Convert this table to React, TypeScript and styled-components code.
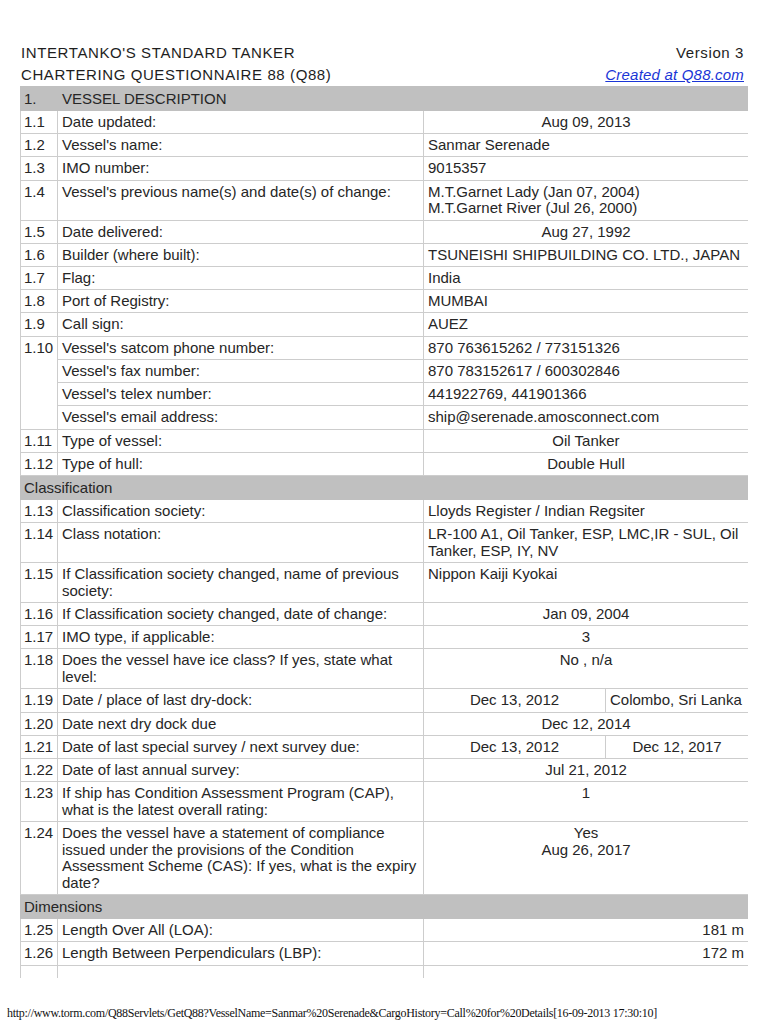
import React from "react";
import styled, { createGlobalStyle } from "styled-components";

const Global = createGlobalStyle`
  html, body { margin: 0; padding: 0; background: #ffffff; }
  body { font-family: "Liberation Sans", Arial, sans-serif; color: #262626; }
`;

const Page = styled.div`
  width: 768px;
  height: 1024px;
  display: flex;
  flex-direction: column;
  overflow: hidden;
`;

const Head = styled.header`
  display: flex;
  justify-content: space-between;
  padding: 42px 24px 0 21px;
  font-size: 15px;
  line-height: 22px;
  letter-spacing: 0.6px;
  color: #1e1e1e;
`;

const HeadCol = styled.div<{ $right?: boolean }>`
  display: flex;
  flex-direction: column;
  align-items: ${(p) => (p.$right ? "flex-end" : "flex-start")};
`;

const Link = styled.a`
  color: #1a35d6;
  font-style: italic;
  text-decoration: underline;
  letter-spacing: 0.2px;
`;

const Clip = styled.div`
  margin-left: 20px;
  width: 728px;
  height: 892px;
  overflow: hidden;
`;

const Table = styled.table`
  width: 728px;
  border-collapse: collapse;
  table-layout: fixed;
  font-size: 15px;
  line-height: 16.6px;
`;

const Cell = styled.td<{ $align?: "left" | "center" | "right" }>`
  border: 1px solid #cdcdcd;
  padding: 3px 4px 2.65px 4px;
  vertical-align: top;
  text-align: ${(p) => p.$align || "left"};
  white-space: pre-line;
  overflow: hidden;
`;

const NumCell = styled(Cell)`
  padding-left: 3px;
  padding-right: 0;
  white-space: nowrap;
`;

const SectionCell = styled.td`
  background: #c0c0c0;
  border: 1px solid #c0c0c0;
  padding: 4px 3px 3px 3px;
  line-height: 16px;
  vertical-align: top;
`;

const SectionNum = styled.span`
  display: inline-block;
  width: 38px;
`;

const EmptyRow = styled.tr`
  height: 24px;
  & > td { border-bottom: none; }
`;

const Footer = styled.footer`
  margin-top: auto;
  padding: 0 0 4px 7px;
  font-family: "Liberation Serif", "Times New Roman", serif;
  font-size: 12px;
  line-height: 14px;
  color: #111111;
  letter-spacing: -0.28px;
  white-space: nowrap;
`;

type Align = "left" | "center" | "right";
type R =
  | { kind: "section"; num?: string; title: string }
  | {
      kind: "row";
      num?: string;
      numSpan?: number;
      noNum?: boolean;
      label: string;
      value: string;
      align?: Align;
      value2?: string;
      align2?: Align;
    };

const rows: R[] = [
  { kind: "section", num: "1.", title: "VESSEL DESCRIPTION" },
  { kind: "row", num: "1.1", label: "Date updated:", value: "Aug 09, 2013", align: "center" },
  { kind: "row", num: "1.2", label: "Vessel's name:", value: "Sanmar Serenade" },
  { kind: "row", num: "1.3", label: "IMO number:", value: "9015357" },
  {
    kind: "row",
    num: "1.4",
    label: "Vessel's previous name(s) and date(s) of change:",
    value: "M.T.Garnet Lady (Jan 07, 2004)\nM.T.Garnet River (Jul 26, 2000)",
  },
  { kind: "row", num: "1.5", label: "Date delivered:", value: "Aug 27, 1992", align: "center" },
  { kind: "row", num: "1.6", label: "Builder (where built):", value: "TSUNEISHI SHIPBUILDING CO. LTD., JAPAN" },
  { kind: "row", num: "1.7", label: "Flag:", value: "India" },
  { kind: "row", num: "1.8", label: "Port of Registry:", value: "MUMBAI" },
  { kind: "row", num: "1.9", label: "Call sign:", value: "AUEZ" },
  { kind: "row", num: "1.10", numSpan: 4, label: "Vessel's satcom phone number:", value: "870 763615262 / 773151326" },
  { kind: "row", noNum: true, label: "Vessel's fax number:", value: "870 783152617 / 600302846" },
  { kind: "row", noNum: true, label: "Vessel's telex number:", value: "441922769, 441901366" },
  { kind: "row", noNum: true, label: "Vessel's email address:", value: "ship@serenade.amosconnect.com" },
  { kind: "row", num: "1.11", label: "Type of vessel:", value: "Oil Tanker", align: "center" },
  { kind: "row", num: "1.12", label: "Type of hull:", value: "Double Hull", align: "center" },
  { kind: "section", title: "Classification" },
  { kind: "row", num: "1.13", label: "Classification society:", value: "Lloyds Register / Indian Regsiter" },
  {
    kind: "row",
    num: "1.14",
    label: "Class notation:",
    value: "LR-100 A1, Oil Tanker, ESP, LMC,IR - SUL, Oil Tanker, ESP, IY, NV",
  },
  {
    kind: "row",
    num: "1.15",
    label: "If Classification society changed, name of previous society:",
    value: "Nippon Kaiji Kyokai",
  },
  {
    kind: "row",
    num: "1.16",
    label: "If Classification society changed, date of change:",
    value: "Jan 09, 2004",
    align: "center",
  },
  { kind: "row", num: "1.17", label: "IMO type, if applicable:", value: "3", align: "center" },
  {
    kind: "row",
    num: "1.18",
    label: "Does the vessel have ice class? If yes, state what level:",
    value: "No , n/a",
    align: "center",
  },
  {
    kind: "row",
    num: "1.19",
    label: "Date / place of last dry-dock:",
    value: "Dec 13, 2012",
    align: "center",
    value2: "Colombo, Sri Lanka",
    align2: "left",
  },
  { kind: "row", num: "1.20", label: "Date next dry dock due", value: "Dec 12, 2014", align: "center" },
  {
    kind: "row",
    num: "1.21",
    label: "Date of last special survey / next survey due:",
    value: "Dec 13, 2012",
    align: "center",
    value2: "Dec 12, 2017",
    align2: "center",
  },
  { kind: "row", num: "1.22", label: "Date of last annual survey:", value: "Jul 21, 2012", align: "center" },
  {
    kind: "row",
    num: "1.23",
    label: "If ship has Condition Assessment Program (CAP), what is the latest overall rating:",
    value: "1",
    align: "center",
  },
  {
    kind: "row",
    num: "1.24",
    label:
      "Does the vessel have a statement of compliance issued under the provisions of the Condition Assessment Scheme (CAS): If yes, what is the expiry date?",
    value: "Yes\nAug 26, 2017",
    align: "center",
  },
  { kind: "section", title: "Dimensions" },
  { kind: "row", num: "1.25", label: "Length Over All (LOA):", value: "181 m", align: "right" },
  {
    kind: "row",
    num: "1.26",
    label: "Length Between Perpendiculars (LBP):",
    value: "172 m",
    align: "right",
  },
];

export default function App() {
  return (
    <Page>
      <Global />
      <Head>
        <HeadCol>
          <span>INTERTANKO'S STANDARD TANKER</span>
          <span>CHARTERING QUESTIONNAIRE 88 (Q88)</span>
        </HeadCol>
        <HeadCol $right>
          <span>Version 3</span>
          <Link href="#">Created at Q88.com</Link>
        </HeadCol>
      </Head>
      <Clip>
        <Table>
          <colgroup>
            <col style={{ width: 37 }} />
            <col style={{ width: 366 }} />
            <col style={{ width: 182 }} />
            <col style={{ width: 143 }} />
          </colgroup>
          <tbody>
            {rows.map((r, i) =>
              r.kind === "section" ? (
                <tr key={i}>
                  <SectionCell colSpan={4}>
                    {r.num && <SectionNum>{r.num}</SectionNum>}
                    {r.title}
                  </SectionCell>
                </tr>
              ) : (
                <tr key={i}>
                  {!r.noNum && <NumCell rowSpan={r.numSpan}>{r.num}</NumCell>}
                  <Cell>{r.label}</Cell>
                  {r.value2 !== undefined ? (
                    <>
                      <Cell $align={r.align}>{r.value}</Cell>
                      <Cell $align={r.align2}>{r.value2}</Cell>
                    </>
                  ) : (
                    <Cell colSpan={2} $align={r.align}>
                      {r.value}
                    </Cell>
                  )}
                </tr>
              )
            )}
            <EmptyRow>
              <Cell />
              <Cell />
              <Cell colSpan={2} />
            </EmptyRow>
          </tbody>
        </Table>
      </Clip>
      <Footer>
        http://www.torm.com/Q88Servlets/GetQ88?VesselName=Sanmar%20Serenade&amp;CargoHistory=Call%20for%20Details[16-09-2013 17:30:10]
      </Footer>
    </Page>
  );
}
